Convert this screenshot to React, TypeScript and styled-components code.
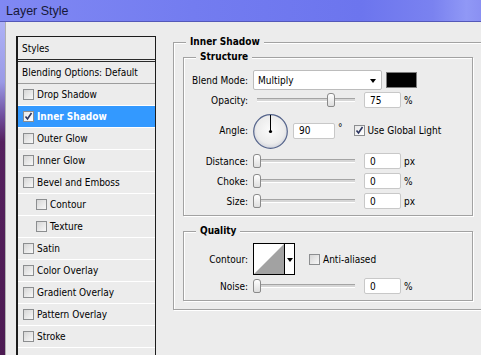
import React from 'react'
import styled, { createGlobalStyle, css } from 'styled-components'

const GlobalStyle = createGlobalStyle`
    html, body {
        margin: 0;
        padding: 0;
        background: #ececec;
    }
    body {
        font-family: "DejaVu Sans Condensed", "Liberation Sans", Arial, sans-serif;
        font-size: 10px;
        color: #000;
    }
`

const Window = styled.div`
    width: 481px;
    height: 355px;
    overflow: hidden;
    display: flex;
    flex-direction: column;
`
const TitleBar = styled.div`
    height: 21px;
    flex-shrink: 0;
    display: flex;
    align-items: center;
    padding-left: 6px;
    border-bottom: 1px solid #5458b8;
    background: linear-gradient(90deg, #8088f3 0%, #737cf0 40%, #6c75ee 75%, #7a82f0 90%, #9098f6 97%, #8a90f3 100%);
`
const Title = styled.span`
    font-family: "Liberation Sans", Arial, sans-serif;
    font-size: 12.5px;
    color: #161838;
    margin-top: 1px;
`
const Body = styled.div`
    flex: 1;
    min-height: 0;
    display: flex;
`
const FrameEdge = styled.div`
    width: 5px;
    flex-shrink: 0;
    background: linear-gradient(180deg, #aeb2f6 0%, #9a9ae6 18%, #7050a0 28%, #55205e 36%, #4c1a52 100%);
`
const Dialog = styled.div`
    flex: 1;
    display: flex;
    align-items: flex-start;
    gap: 17px;
    padding-left: 10px;
    overflow: hidden;
    background: #ececec;
    border-left: 1px solid #b0b0b0;
`

/* ---------- styles list ---------- */

const StylesList = styled.div`
    width: 140px;
    height: 340px;
    flex-shrink: 0;
    box-sizing: border-box;
    margin-top: 14px;
    border: 1px solid #1c1c1c;
    border-left-width: 2px;
    background: #ececec;
`
const ListHeader = styled.div`
    height: 25px;
    box-sizing: border-box;
    display: flex;
    align-items: center;
    padding-left: 4px;
    border-bottom: 3px double #2a2a2a;
`
const ListItem = styled.div<{ $selected?: boolean; $indent?: boolean; $plain?: boolean }>`
    height: 22px;
    box-sizing: border-box;
    display: flex;
    align-items: center;
    gap: 3px;
    padding-left: ${p => (p.$plain ? 4 : p.$indent ? 18 : 5)}px;
    border-bottom: 1px solid ${p => (p.$plain ? '#9c9c9c' : '#ffffff')};
    ${p => p.$selected && css`
        background: #3399ff;
        color: #fff;
        font-weight: bold;
    `}
`

const Box = styled.span<{ $checked?: boolean }>`
    width: 11px;
    height: 11px;
    flex-shrink: 0;
    box-sizing: border-box;
    display: inline-flex;
    align-items: center;
    justify-content: center;
    border: 1px solid #8c8e90;
    background: ${p => (p.$checked ? 'linear-gradient(135deg, #e8e8e8, #ffffff)' : 'linear-gradient(135deg, #d6d6d6, #f8f8f8)')};
`

const Checkbox = ({ checked }: { checked?: boolean }) => (
    <Box $checked={checked}>
        {checked && (
            <svg width="9" height="9" viewBox="0 0 9 9">
                <path d="M1.5 4.5 L3.5 7 L7.5 1" fill="none" stroke="#2c3560" strokeWidth="1.6" />
            </svg>
        )}
    </Box>
)

/* ---------- settings ---------- */

const Group = styled.fieldset<{ $outer?: boolean }>`
    margin: ${p => (p.$outer ? '13px 0 0 0' : '0')};
    padding: ${p => (p.$outer ? '1px 0 8px 9px' : '0 0 4px 0')};
    width: ${p => (p.$outer ? '330px' : '290px')};
    flex-shrink: 0;
    box-sizing: border-box;
    border: 1px solid #a2a2a2;
    box-shadow: inset 1px 1px 0 #fff, 1px 1px 0 #fff;
    & + & {
        margin-top: 8px;
    }
`
const Legend = styled.legend<{ $outer?: boolean }>`
    margin-left: ${p => (p.$outer ? 3 : 12)}px;
    padding: 0 4px;
    font-weight: bold;
    line-height: 14px;
    background: #ececec;
`
const Row = styled.div<{ $h?: number; $top?: number }>`
    height: ${p => p.$h ?? 20}px;
    margin-top: ${p => p.$top ?? 0}px;
    display: flex;
    align-items: center;
`
const Label = styled.span`
    width: 64px;
    flex-shrink: 0;
    text-align: right;
    margin-right: 5px;
`
const Select = styled.div`
    width: 129px;
    height: 20px;
    box-sizing: border-box;
    display: flex;
    align-items: center;
    justify-content: space-between;
    padding: 0 5px 0 4px;
    background: #fff;
    border: 1px solid #bcbcbc;
    border-radius: 2px;
`
const Arrow = styled.span`
    width: 0;
    height: 0;
    border-left: 3px solid transparent;
    border-right: 3px solid transparent;
    border-top: 4px solid #000;
    margin-top: 1px;
`
const Swatch = styled.span<{ $color: string }>`
    width: 31px;
    height: 16px;
    margin-left: 4px;
    margin-top: -1px;
    box-sizing: border-box;
    border: 1px solid #7c7c7c;
    background: ${p => p.$color};
`
const SliderWrap = styled.div`
    position: relative;
    width: 104px;
    height: 16px;
    display: flex;
    align-items: center;
    margin-right: 7px;
`
const Track = styled.div`
    flex: 1;
    margin: 0 2px 0 4px;
    height: 2px;
    background: #d6d6d6;
    border-top: 1px solid #a4a4a4;
    border-bottom: 1px solid #ffffff;
`
const Thumb = styled.span`
    position: absolute;
    top: 1px;
    width: 8px;
    height: 14px;
    box-sizing: border-box;
    border: 1px solid #8a8a8a;
    border-radius: 3px 3px 2px 2px;
    background: linear-gradient(180deg, #ffffff, #dedede);
`
const Field = styled.span<{ $w?: number }>`
    width: ${p => p.$w ?? 37}px;
    height: 16px;
    box-sizing: border-box;
    display: inline-flex;
    align-items: center;
    padding-left: 5px;
    background: #fff;
    border: 1px solid #c8c8c8;
    border-radius: 2px;
`
const Unit = styled.span`
    margin-left: 3px;
`
const Degree = styled.span`
    margin: 0 11px 6px 3px;
`
const CheckLabel = styled.span`
    margin-left: 3px;
`
const Dial = styled.span`
    width: 35px;
    height: 35px;
    flex-shrink: 0;
    margin-right: 5px;
    margin-top: 2px;
    display: inline-flex;
`
const ContourPicker = styled.span`
    width: 42px;
    height: 32px;
    box-sizing: border-box;
    display: flex;
    border: 1px solid #000;
    background: #fff;
    margin-right: 14px;
`
const ContourArrow = styled.span`
    flex: 1;
    display: flex;
    align-items: center;
    justify-content: center;
    border-left: 1px solid #000;
`

const Slider = ({ value }: { value: number }) => (
    <SliderWrap>
        <Track />
        <Thumb style={{ left: `${(value / 100) * 99}px` }} />
    </SliderWrap>
)

const styleItems = [
    { name: 'Drop Shadow' },
    { name: 'Inner Shadow', checked: true, selected: true },
    { name: 'Outer Glow' },
    { name: 'Inner Glow' },
    { name: 'Bevel and Emboss' },
    { name: 'Contour', indent: true },
    { name: 'Texture', indent: true },
    { name: 'Satin' },
    { name: 'Color Overlay' },
    { name: 'Gradient Overlay' },
    { name: 'Pattern Overlay' },
    { name: 'Stroke' },
]

const App = () => {
    return (
        <Window>
            <GlobalStyle />
            <TitleBar><Title>Layer Style</Title></TitleBar>
            <Body>
                <FrameEdge />
                <Dialog>
                    <StylesList>
                        <ListHeader>Styles</ListHeader>
                        <ListItem $plain>Blending Options: Default</ListItem>
                        {styleItems.map(item => (
                            <ListItem key={item.name} $selected={item.selected} $indent={item.indent}>
                                <Checkbox checked={item.checked} />
                                {item.name}
                            </ListItem>
                        ))}
                    </StylesList>

                    <Group $outer>
                        <Legend $outer>Inner Shadow</Legend>
                        <Group>
                            <Legend>Structure</Legend>
                            <Row $top={6}>
                                <Label>Blend Mode:</Label>
                                <Select>Multiply<Arrow /></Select>
                                <Swatch $color="#000" />
                            </Row>
                            <Row>
                                <Label>Opacity:</Label>
                                <Slider value={75} />
                                <Field>75</Field>
                                <Unit>%</Unit>
                            </Row>
                            <Row $h={41}>
                                <Label>Angle:</Label>
                                <Dial>
                                    <svg width="35" height="35" viewBox="0 0 35 35">
                                        <defs>
                                            <radialGradient id="dialFill" cx="50%" cy="45%" r="55%">
                                                <stop offset="0%" stopColor="#fbfbfb" />
                                                <stop offset="75%" stopColor="#ececec" />
                                                <stop offset="100%" stopColor="#d2d4dc" />
                                            </radialGradient>
                                        </defs>
                                        <circle cx="17.5" cy="17.5" r="16.8" fill="url(#dialFill)" stroke="#56658c" strokeWidth="1.2" />
                                        <line x1="17.5" y1="17.5" x2="17.5" y2="1" stroke="#000" strokeWidth="1" />
                                        <circle cx="17.5" cy="17.5" r="1.6" fill="#000" />
                                    </svg>
                                </Dial>
                                <Field $w={42}>90</Field>
                                <Degree>°</Degree>
                                <Checkbox checked />
                                <CheckLabel>Use Global Light</CheckLabel>
                            </Row>
                            <Row>
                                <Label>Distance:</Label>
                                <Slider value={0} />
                                <Field>0</Field>
                                <Unit>px</Unit>
                            </Row>
                            <Row>
                                <Label>Choke:</Label>
                                <Slider value={0} />
                                <Field>0</Field>
                                <Unit>%</Unit>
                            </Row>
                            <Row>
                                <Label>Size:</Label>
                                <Slider value={0} />
                                <Field>0</Field>
                                <Unit>px</Unit>
                            </Row>
                        </Group>

                        <Group>
                            <Legend>Quality</Legend>
                            <Row $h={32} $top={5}>
                                <Label>Contour:</Label>
                                <ContourPicker>
                                    <svg width="30" height="30" viewBox="0 0 30 30">
                                        <polygon points="0,30 30,0 30,30" fill="#a2a2a2" />
                                    </svg>
                                    <ContourArrow><Arrow /></ContourArrow>
                                </ContourPicker>
                                <Checkbox />
                                <CheckLabel>Anti-aliased</CheckLabel>
                            </Row>
                            <Row $top={1}>
                                <Label>Noise:</Label>
                                <Slider value={0} />
                                <Field>0</Field>
                                <Unit>%</Unit>
                            </Row>
                        </Group>
                    </Group>
                </Dialog>
            </Body>
        </Window>
    )
}

export default App
